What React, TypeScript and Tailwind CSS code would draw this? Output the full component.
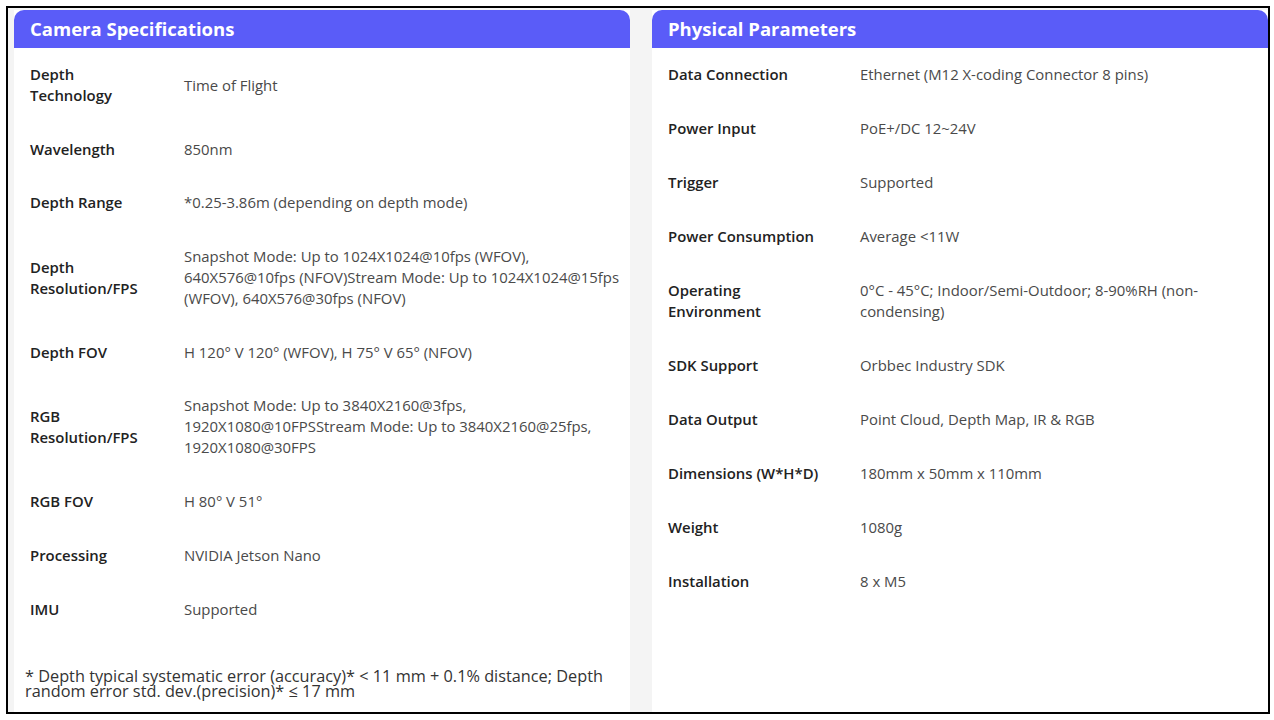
import React from "react";

const left: [string, string][] = [
  ["Depth Technology", "Time of Flight"],
  ["Wavelength", "850nm"],
  ["Depth Range", "*0.25-3.86m (depending on depth mode)"],
  [
    "Depth Resolution/FPS",
    "Snapshot Mode: Up to 1024X1024@10fps (WFOV), 640X576@10fps (NFOV)Stream Mode: Up to 1024X1024@15fps (WFOV), 640X576@30fps (NFOV)",
  ],
  ["Depth FOV", "H 120° V 120° (WFOV), H 75° V 65° (NFOV)"],
  [
    "RGB Resolution/FPS",
    "Snapshot Mode: Up to 3840X2160@3fps, 1920X1080@10FPSStream Mode: Up to 3840X2160@25fps, 1920X1080@30FPS",
  ],
  ["RGB FOV", "H 80° V 51°"],
  ["Processing", "NVIDIA Jetson Nano"],
  ["IMU", "Supported"],
];

const right: [string, string][] = [
  ["Data Connection", "Ethernet (M12 X-coding Connector 8 pins)"],
  ["Power Input", "PoE+/DC 12~24V"],
  ["Trigger", "Supported"],
  ["Power Consumption", "Average <11W"],
  ["Operating Environment", "0°C - 45°C; Indoor/Semi-Outdoor; 8-90%RH (non-condensing)"],
  ["SDK Support", "Orbbec Industry SDK"],
  ["Data Output", "Point Cloud, Depth Map, IR & RGB"],
  ["Dimensions (W*H*D)", "180mm x 50mm x 110mm"],
  ["Weight", "1080g"],
  ["Installation", "8 x M5"],
];

function Panel({
  title,
  rows,
  labelW,
  valueW,
  rowPb,
  footer,
}: {
  title: string;
  rows: [string, string][];
  labelW: string;
  valueW: string;
  rowPb: string;
  footer?: React.ReactNode;
}) {
  return (
    <div className="w-[616px] flex flex-col bg-white">
      <div className="h-[38px] bg-[#5a5cf8] rounded-t-[10px] px-4 flex items-center">
        <span className="text-white font-bold text-[18.5px]">{title}</span>
      </div>
      <div className="flex flex-col">
        {rows.map(([k, v]) => (
          <div key={k} className={`flex items-center pl-4 pt-4 ${rowPb}`}>
            <div className={`${labelW} shrink-0 text-[14.9px] leading-[21px] font-semibold text-[#222]`}>{k}</div>
            <div className={`${valueW} text-[14.9px] leading-[21px] text-[#4a4a4a]`}>{v}</div>
          </div>
        ))}
      </div>
      {footer}
    </div>
  );
}

export default function App() {
  return (
    <div
      className="w-[1274px] h-[720px] bg-white p-[6px] flex"
      style={{ fontFamily: "'Open Sans', 'Noto Sans', sans-serif" }}
    >
      <div className="flex-1 border-2 border-black bg-[#f4f4f4] flex gap-[22px] pl-[6px] pt-[2px]">
        <Panel
          title="Camera Specifications"
          rows={left}
          labelW="w-[154px] pr-[40px]"
          valueW="w-[442px]"
          rowPb="pb-[16.7px]"
          footer={
            <div className="pl-[11px] pr-6 mt-[33px] text-[16.3px] leading-[15px] text-[#333]">
              * Depth typical systematic error (accuracy)* &lt; 11 mm + 0.1% distance; Depth random error std. dev.(precision)* ≤ 17 mm
            </div>
          }
        />
        <Panel
          title="Physical Parameters"
          rows={right}
          labelW="w-[192px] pr-[32px]"
          valueW="w-[360px]"
          rowPb="pb-[17px]"
        />
      </div>
    </div>
  );
}
